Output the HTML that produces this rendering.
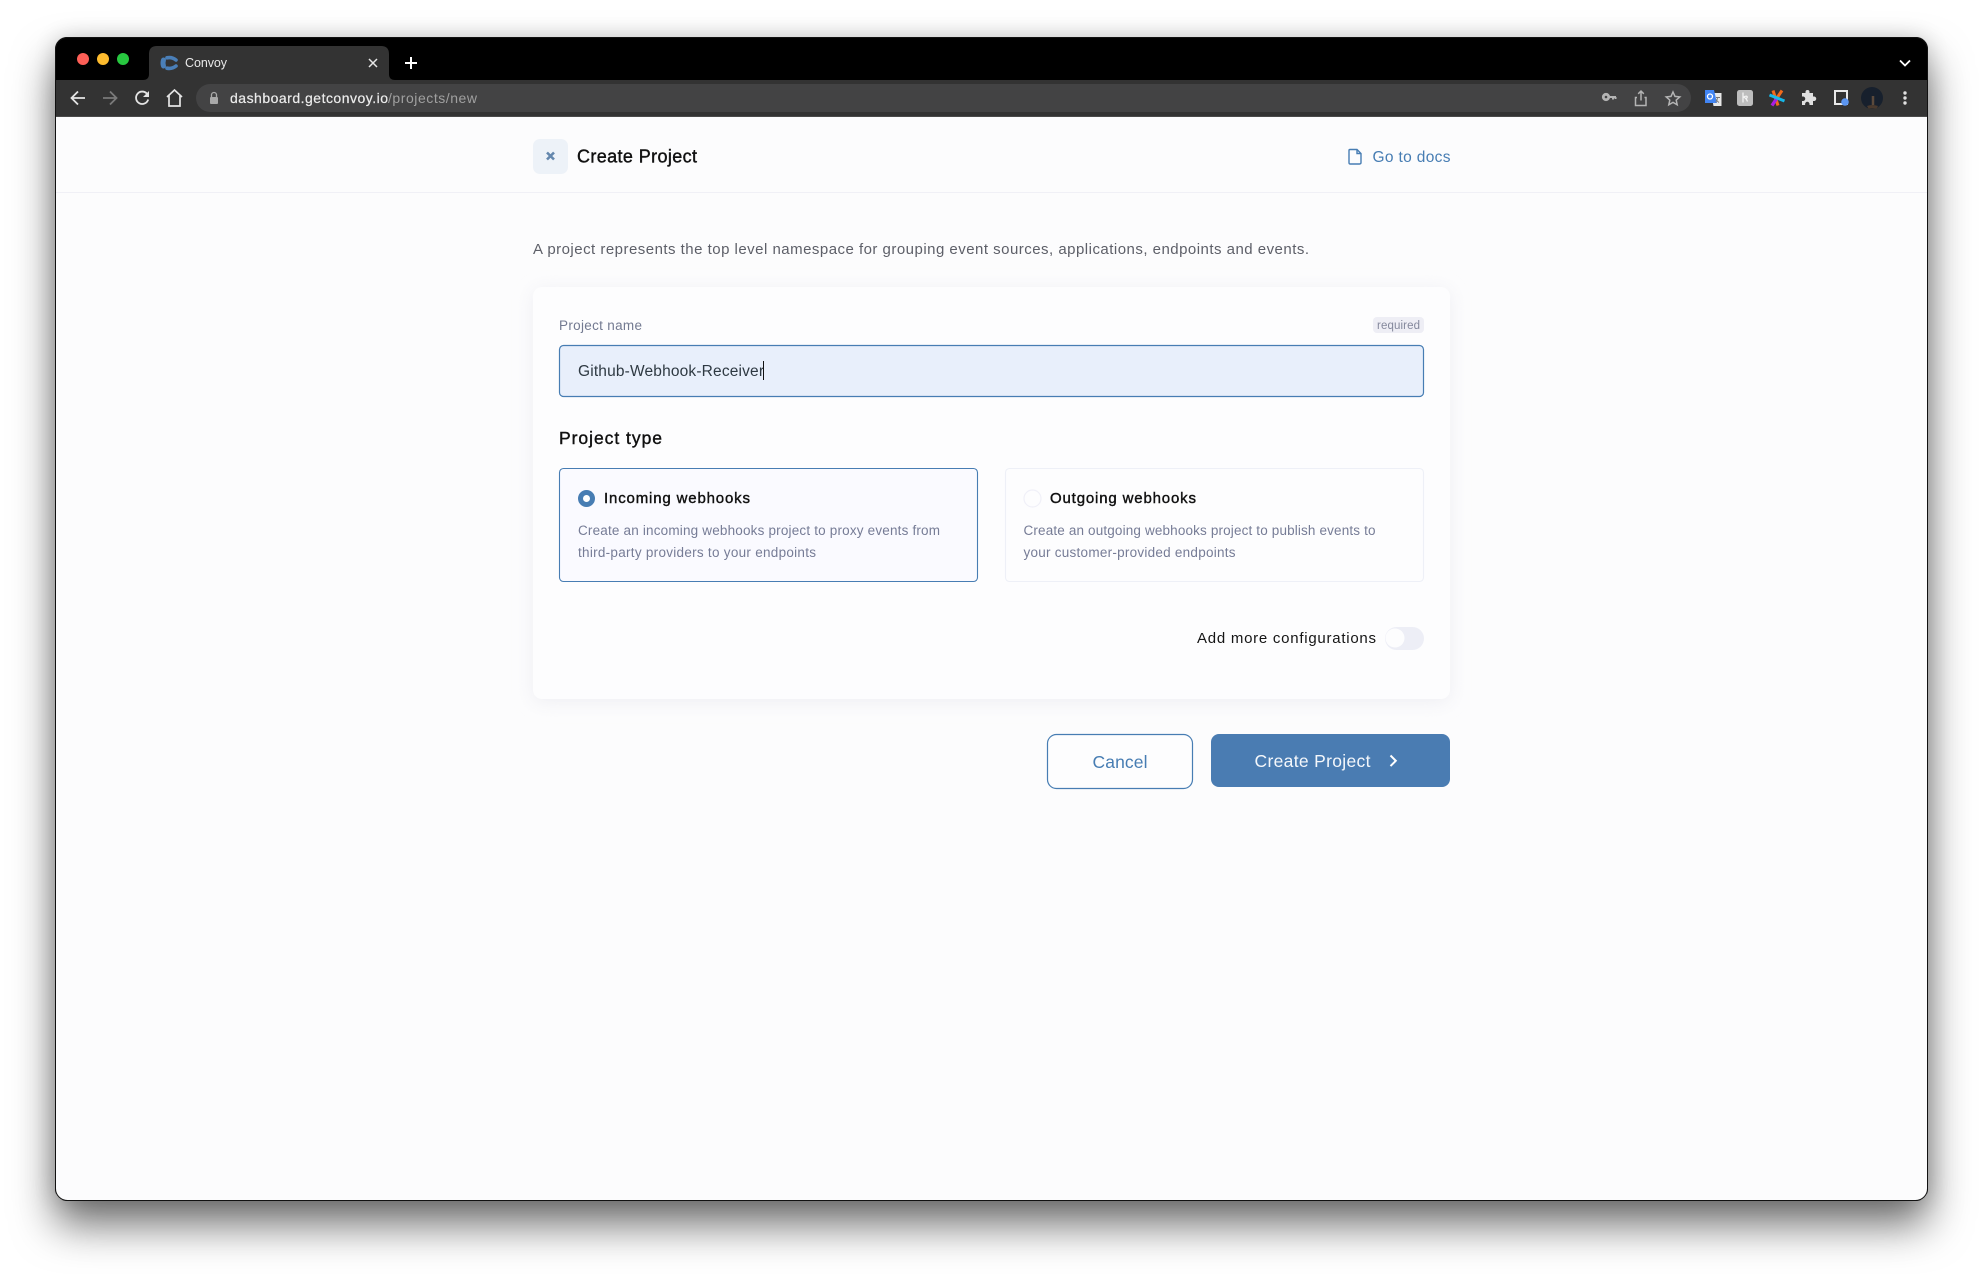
<!DOCTYPE html>
<html lang="en">
<head>
<meta charset="utf-8">
<title>Convoy</title>
<style>
html,body{margin:0;padding:0;width:1983px;height:1274px;overflow:hidden;background:#fff}
#win{position:absolute;left:55px;top:37px;width:1873px;height:1164px;border-radius:12px;box-shadow:0 24px 42px rgba(0,0,0,.56),0 0 22px rgba(0,0,0,.16)}
svg{position:absolute;left:0;top:0}
text{font-family:"Liberation Sans",sans-serif}
.sb{stroke-width:.4px;paint-order:stroke}
</style>
</head>
<body>
<div id="win"></div>
<svg width="1983" height="1274" viewBox="0 0 1983 1274" xmlns="http://www.w3.org/2000/svg">
<defs>
<clipPath id="w"><rect x="55" y="37" width="1873" height="1164" rx="12"/></clipPath>
<filter id="cs" x="-5%" y="-10%" width="110%" height="125%"><feGaussianBlur stdDeviation="9"/></filter>
</defs>
<g clip-path="url(#w)">
  <rect x="55" y="37" width="1873" height="1164" fill="#000"/>
  <rect x="55" y="80" width="1873" height="36" fill="#333"/>
  <rect x="55" y="116" width="1873" height="1" fill="#4a4a4a"/>
  <rect x="56" y="117" width="1871" height="1083" fill="#fcfcfd"/>
  <path d="M143 80q6 0 6-6V54q0-8 8-8h224q8 0 8 8v20q0 6 6 6z" fill="#333"/>
</g>
<rect x="55.500" y="37.500" width="1872" height="1163" rx="12" fill="none" stroke="#111" stroke-width="1"/>
<!-- traffic lights -->
<circle cx="83" cy="59" r="6" fill="#fe5f57"/><circle cx="103" cy="59" r="6" fill="#febc2e"/><circle cx="123" cy="59" r="6" fill="#28c840"/>
<!-- favicon -->
<g fill="none" stroke="#4a7fb8" stroke-linecap="round">
  <path d="M163.500 60Q162.500 63 163.500 66" stroke-width="5"/>
  <path d="M167 57.800Q172 56.800 176 60" stroke-width="3.600"/>
  <path d="M167 68.200Q172 69.200 176 66" stroke-width="3.600"/>
</g>
<text x="185" y="67" font-size="12.500" fill="#e8e8e8" textLength="42">Convoy</text>
<path d="M369 59l8 8m0-8l-8 8" stroke="#e6e6e6" stroke-width="1.500" fill="none"/>
<path d="M411 57v12m-6-6h12" stroke="#fff" stroke-width="2" fill="none"/>
<path d="M1900 60.500l5 5 5-5" stroke="#fff" stroke-width="1.800" fill="none"/>
<!-- toolbar -->
<path d="M85 98H72m6-6.500L71.500 98l6.500 6.500" stroke="#e4e4e4" stroke-width="1.800" fill="none"/>
<path d="M103 98h13m-6-6.500l6.500 6.500-6.500 6.500" stroke="#7a7a7a" stroke-width="1.800" fill="none"/>
<path d="M147 93.800A6.200 6.200 0 1 0 148.200 99.500" stroke="#e4e4e4" stroke-width="1.800" fill="none"/>
<path d="M149 91v6h-6z" fill="#e4e4e4"/>
<path d="M167 97l7.500-7 7.500 7m-13 -1.500V106h11V95.500" stroke="#e4e4e4" stroke-width="1.700" fill="none"/>
<rect x="196" y="84" width="1495" height="28" rx="14" fill="#434344"/>
<rect x="210" y="97" width="8" height="7" rx="1" fill="#a9a9a9"/>
<path d="M211.500 97v-2a2.500 2.500 0 0 1 5 0v2" stroke="#a9a9a9" stroke-width="1.300" fill="none"/>
<text x="230" y="103" font-size="14" fill="#ececec" stroke="#ececec" class="sb" style="stroke-width:.2px" textLength="158">dashboard.getconvoy.io</text>
<text x="388" y="103" font-size="14" fill="#a0a0a0" textLength="89">/projects/new</text>
<!-- right icons -->
<circle cx="1606" cy="97" r="3" fill="#b4b4b4" stroke="#b4b4b4" stroke-width="2.200"/>
<circle cx="1606" cy="97" r="1.300" fill="#434344"/>
<path d="M1609 97h7m-3 0v2.500m2.500-2.500v2" stroke="#b4b4b4" stroke-width="2" fill="none"/>
<path d="M1637 97.500h-1.500v8h10.500v-8H1644.500m-3.500 3v-9.500m-2.800 2.800l2.800-2.800 2.800 2.800" stroke="#b4b4b4" stroke-width="1.500" fill="none"/>
<path d="M1673 92l2 4.400 4.800.5-3.600 3.200 1 4.700-4.200-2.400-4.200 2.400 1-4.700-3.600-3.200 4.800-.5z" stroke="#b4b4b4" stroke-width="1.500" fill="none"/>
<path d="M1711 93h10.500v13h-8z" fill="#e8e8e8"/>
<path d="M1705 90h9l3 13h-12z" fill="#4285f4"/>
<circle cx="1710" cy="96.500" r="2.500" fill="none" stroke="#fff" stroke-width="1.300"/>
<path d="M1716 97.500h4m-2.500 0q-.2 3-2 5m.5-3q1.500 2 3 3" stroke="#777" stroke-width=".9" fill="none"/>
<rect x="1737" y="90" width="16" height="16" rx="2.500" fill="#bdbdbd"/>
<path d="M1743 92.500v10m0-5q3-2 4-1 1 1-1.500 2.500M1743 97q3 .5 4.500 4.500" stroke="#f2f2f2" stroke-width="1.300" fill="none"/>
<path d="M1773 90.500l5 15" stroke="#f26a1b" stroke-width="3" fill="none"/>
<path d="M1782 90.500l-10 15" stroke="#f26a1b" stroke-width="3" fill="none"/>
<path d="M1777 98l-5 7.500" stroke="#a51ee6" stroke-width="3.200" fill="none"/>
<path d="M1784 90.500l-3.500 4.500" stroke="#a51ee6" stroke-width="0" fill="none"/>
<path d="M1769.500 95l15 6" stroke="#16b7e8" stroke-width="3" fill="none"/>
<path d="M1802 93h3.500v-1a2 2 0 0 1 4 0v1h3.500v3.500h1a2.200 2.200 0 0 1 0 4.500h-1v4h-3.500v-1a2.200 2.200 0 0 0-4.400 0v1H1802v-4h1a2.200 2.200 0 0 0 0-4.500h-1z" fill="#e0e0e0"/>
<rect x="1835" y="91" width="12" height="13" fill="none" stroke="#e8e8e8" stroke-width="2"/>
<rect x="1840" y="91" width="7" height="8" fill="#e8e8e8" opacity="0"/>
<circle cx="1845" cy="102" r="3.800" fill="#5b95f0"/>
<circle cx="1872" cy="98" r="11" fill="#17202d"/>
<path d="M1867 106q5-2 11 0l-1.500 2.500h-8z" fill="#4a3a2e"/>
<path d="M1873 96v9" stroke="#5b4a3c" stroke-width="2.500"/>
<circle cx="1905" cy="93" r="1.700" fill="#e0e0e0"/><circle cx="1905" cy="98" r="1.700" fill="#e0e0e0"/><circle cx="1905" cy="103" r="1.700" fill="#e0e0e0"/>

<!-- header -->
<rect x="56" y="192" width="1871" height="1" fill="#f0f0f6"/>
<rect x="533" y="139" width="35" height="35" rx="7" fill="#edf2f8"/>
<path d="M547 152.500l7 7m0-7l-7 7" stroke="#6487ad" stroke-width="2.600" fill="none"/>
<text x="577" y="162.500" font-size="18" fill="#101010" stroke="#101010" class="sb" textLength="120">Create Project</text>
<path d="M1350 150.500h7l4 4v9q0 1.500-1.500 1.500h-9.500q-1 0-1-1.500V151.500q0-1 1-1zm7 0v4h4" stroke="#477db3" stroke-width="1.400" fill="none" transform="translate(0 -1)"/>
<text x="1372.500" y="162" font-size="15.500" fill="#477db3" textLength="78">Go to docs</text>
<text x="533" y="254" font-size="15" fill="#5d5f68" textLength="776">A project represents the top level namespace for grouping event sources, applications, endpoints and events.</text>

<!-- card -->
<rect x="533" y="290" width="917" height="412" rx="9" fill="#eeeef3" filter="url(#cs)"/>
<rect x="533" y="287" width="917" height="412" rx="9" fill="#fdfdfe"/>
<text x="559" y="330" font-size="13.500" fill="#737a91" textLength="83">Project name</text>
<rect x="1373" y="317" width="51" height="16" rx="4" fill="#eeeef5"/>
<text x="1377" y="329" font-size="11.500" fill="#84889c" textLength="43">required</text>
<rect x="559.500" y="345.500" width="864" height="51" rx="4" fill="#e8effb" stroke="#477db3" stroke-width="1.200"/>
<text x="578" y="376" font-size="15.500" fill="#2e3942" textLength="186">Github-Webhook-Receiver</text>
<rect x="763" y="361" width="1" height="19" fill="#111"/>
<text x="559" y="444" font-size="17.500" fill="#101010" stroke="#101010" class="sb" textLength="103">Project type</text>

<rect x="559.500" y="468.500" width="418" height="113" rx="4" fill="#fafaff" stroke="#477db3" stroke-width="1.100"/>
<circle cx="586.500" cy="498.500" r="6" fill="#fff" stroke="#477db3" stroke-width="5"/>
<text x="604" y="503" font-size="15" fill="#101010" stroke="#101010" class="sb" textLength="146">Incoming webhooks</text>
<text x="578" y="535" font-size="13.500" fill="#767c96" textLength="362">Create an incoming webhooks project to proxy events from</text>
<text x="578" y="557" font-size="13.500" fill="#767c96" textLength="238">third-party providers to your endpoints</text>

<rect x="1005.500" y="468.500" width="418" height="113" rx="4" fill="#fdfdfe" stroke="#eef0f7" stroke-width="1.100"/>
<circle cx="1032.500" cy="498.500" r="8.500" fill="#fdfdfe" stroke="#f0f0f8" stroke-width="1.200"/>
<text x="1050" y="503" font-size="15" fill="#101010" stroke="#101010" class="sb" textLength="146">Outgoing webhooks</text>
<text x="1023.500" y="535" font-size="13.500" fill="#767c96" textLength="352">Create an outgoing webhooks project to publish events to</text>
<text x="1023.500" y="557" font-size="13.500" fill="#767c96" textLength="212">your customer-provided endpoints</text>

<text x="1197" y="643" font-size="15" fill="#151515" textLength="179">Add more configurations</text>
<rect x="1385" y="627" width="39" height="23" rx="11.500" fill="#edeef6"/>
<circle cx="1395" cy="638" r="9.500" fill="#fdfdfe"/>

<!-- buttons -->
<rect x="1047.500" y="734.500" width="145" height="54" rx="9" fill="#fdfdfe" stroke="#477db3" stroke-width="1.200"/>
<text x="1092.500" y="768" font-size="17.500" fill="#477db3" textLength="55">Cancel</text>
<rect x="1211" y="734" width="239" height="53" rx="8" fill="#4a7cb2"/>
<text x="1254.500" y="767" font-size="17.500" fill="#f4f7fb" textLength="116">Create Project</text>
<path d="M1390.500 755.500l5.300 5.300-5.300 5.300" stroke="#fff" stroke-width="2" fill="none"/>
</svg>
</body>
</html>
